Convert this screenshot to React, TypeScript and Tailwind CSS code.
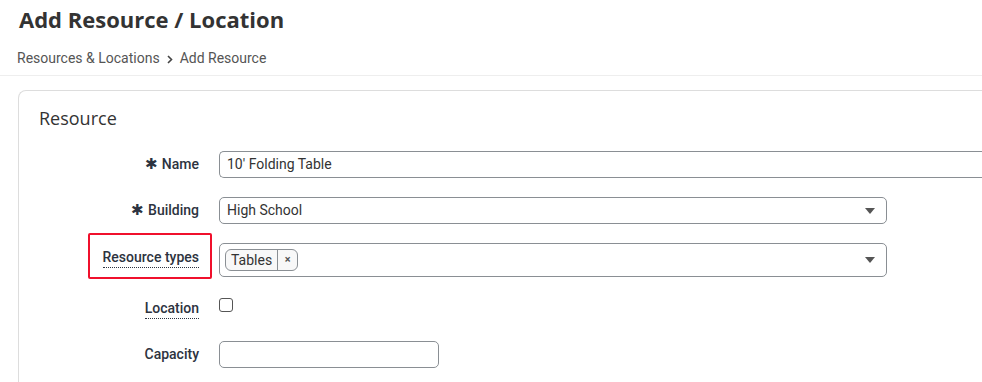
import React from "react";

function Label({
  text,
  required,
  dotted,
  lift,
}: {
  text: string;
  required?: boolean;
  dotted?: boolean;
  lift?: boolean;
}) {
  return (
    <div
      className={
        "w-[180px] shrink-0 text-right text-[14px] font-medium text-[#2d3340]" +
        (lift ? " mt-[-6px]" : "")
      }
    >
      {required && <span className="mr-[4px] text-[15px]">✱</span>}
      <span
        className={
          dotted ? "border-b border-dotted border-[#2d3340] pb-[2px]" : ""
        }
      >
        {text}
      </span>
    </div>
  );
}

function Caret() {
  return (
    <svg width="10" height="6" viewBox="0 0 10 6" className="absolute right-[11px] top-1/2 -translate-y-1/2">
      <path d="M0 0h10L5 6z" fill="#555" />
    </svg>
  );
}

export default function App() {
  return (
    <div
      className="h-[382px] w-[982px] overflow-hidden bg-white text-[#333]"
      style={{ fontFamily: "Roboto, 'Liberation Sans', sans-serif" }}
    >
      <h1
        className="pl-[19px] pt-[4px] text-[22px] font-bold leading-[30px] text-[#333]"
        style={{ fontFamily: "'Open Sans', sans-serif" }}
      >
        Add Resource / Location
      </h1>
      <div className="mt-[14px] flex items-center pl-[17px] text-[14px] text-[#555]">
        <span>Resources &amp; Locations</span>
        <svg width="6" height="9" viewBox="0 0 6 9" className="mx-[7px] mt-[1px]">
          <path d="M1 1l3.5 3.5L1 8" stroke="#444" strokeWidth="1.6" fill="none" />
        </svg>
        <span>Add Resource</span>
      </div>
      <div className="mt-[6px] h-px w-full bg-[#eeeeee]" />

      <div className="ml-[18px] mt-[14px] h-[400px] rounded-tl-[8px] border-l border-t border-[#dddddd] pt-[14px]">
        <h2
          className="pl-[20px] text-[18px] leading-[26px] text-[#333]"
          style={{ fontFamily: "'Open Sans', sans-serif" }}
        >
          Resource
        </h2>

        <div className="mt-[20px] flex flex-col">
          <div className="flex h-[27px] items-center">
            <Label text="Name" required />
            <div className="ml-[20px] flex h-[27px] flex-1 items-center rounded-l-[5px] border-y border-l border-[#8a8f94] pl-[7px] text-[14px] text-[#333]">
              10' Folding Table
            </div>
          </div>

          <div className="mt-[19px] flex h-[27px] items-center">
            <Label text="Building" required />
            <div className="relative ml-[20px] flex h-[27px] w-[668px] items-center rounded-[5px] border border-[#8a8f94] pl-[7px] text-[14px] text-[#333]">
              High School
              <Caret />
            </div>
          </div>

          <div className="relative mt-[19px] flex h-[34px] items-center">
            <div className="absolute left-[69px] top-[-10px] h-[46px] w-[124px] rounded-[2px] border-2 border-[#f0102c]" />
            <Label text="Resource types" dotted lift />
            <div className="relative ml-[20px] flex h-[34px] w-[668px] items-center rounded-[5px] border border-[#8a8f94] pl-[5px] text-[14px] text-[#333]">
              <div className="flex h-[22px] items-center rounded-[6px] border border-[#8a8f94] bg-[#f8f8f8]">
                <span className="px-[5px] leading-[20px]">Tables</span>
                <span className="flex h-full w-[20px] items-center justify-center border-l border-[#8a8f94] text-[11px] font-bold text-[#555]">
                  ×
                </span>
              </div>
              <Caret />
            </div>
          </div>

          <div className="mt-[20px] flex h-[22px] items-center">
            <Label text="Location" dotted />
            <div className="ml-[20px] mt-[-6px] h-[14px] w-[14px] rounded-[3px] border border-[#555]" />
          </div>

          <div className="mt-[22px] flex h-[27px] items-center">
            <Label text="Capacity" />
            <div className="ml-[20px] h-[27px] w-[220px] rounded-[5px] border border-[#8a8f94]" />
          </div>
        </div>
      </div>
    </div>
  );
}
